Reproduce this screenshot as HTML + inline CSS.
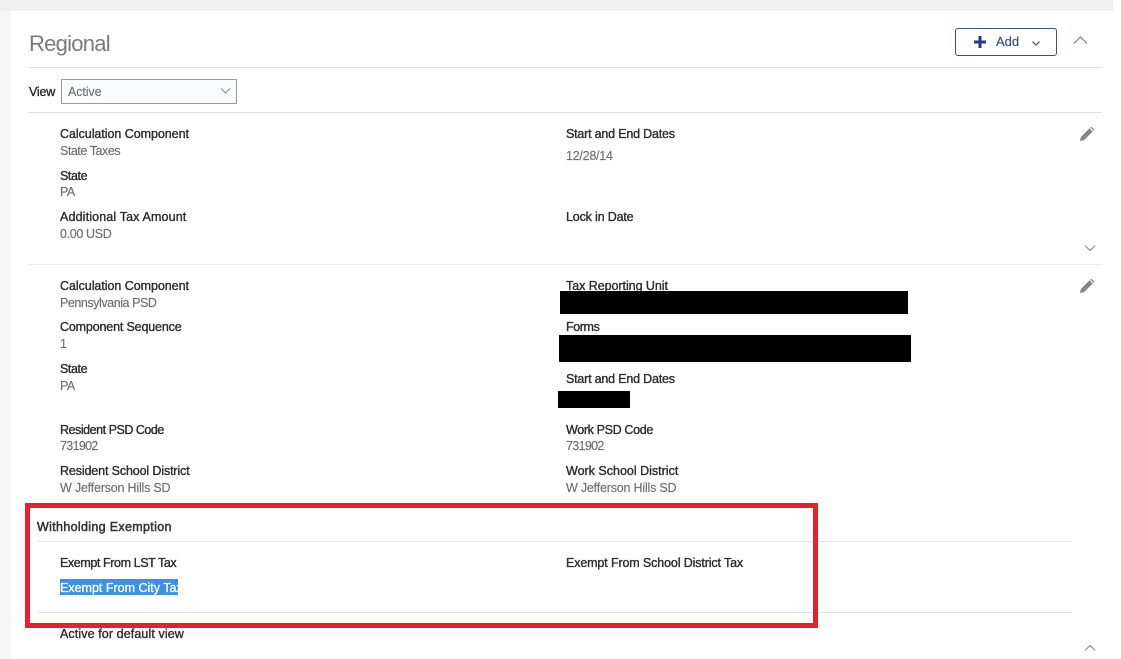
<!DOCTYPE html>
<html><head><meta charset="utf-8"><style>
html,body{margin:0;padding:0}
body{width:1121px;height:659px;background:#fff;position:relative;overflow:hidden;font-family:"Liberation Sans",sans-serif}
.a{position:absolute}
.l,.v{position:absolute;font-size:12.5px;line-height:16px;white-space:nowrap}
.l{color:#2b2b2b;-webkit-text-stroke:.35px #2b2b2b}
.v{color:#6e6e6e;-webkit-text-stroke:.15px #6e6e6e}
.h{position:absolute;height:1px;background:#e2e2e2}
.k{position:absolute;background:#000}
</style></head><body>
<div class="a" style="left:0;top:0;width:1113px;height:11px;background:#f0f0f0"></div>
<div class="a" style="left:0;top:11px;width:11px;height:648px;background:#f6f6f6"></div>
<div class="a" style="left:29px;top:30px;font-size:22px;line-height:28px;color:#7a7a7a;letter-spacing:-.75px">Regional</div>
<div class="h" style="left:28px;top:67px;width:1074px"></div>
<div class="a" style="left:955px;top:28px;width:100px;height:26px;border:1px solid #3c4f86;border-radius:3px"></div>
<svg class="a" style="left:974px;top:36px" width="12" height="12"><path d="M6 0v12M0 6h12" stroke="#24397f" stroke-width="3"/></svg>
<div class="a" style="left:996px;top:34px;font-size:13px;line-height:16px;color:#3c4f86;-webkit-text-stroke:.2px #3c4f86">Add</div>
<svg class="a" style="left:1032px;top:40px" width="8" height="7"><path d="M.5 1.500l3.500 3.500 3.500-3.500" fill="none" stroke="#3c4f86" stroke-width="1.200"/></svg>
<svg class="a" style="left:1073px;top:35px" width="15" height="10"><path d="M1 8.500l6.500-6.500 6.500 6.500" fill="none" stroke="#808080" stroke-width="1.200"/></svg>
<div class="l" style="left:29px;top:84px;letter-spacing:-.2px">View</div>
<div class="a" style="left:61px;top:79px;width:174px;height:23px;border:1px solid #9a9a9a;background:#fbfcfd"></div>
<div class="v" style="left:68px;top:84px;letter-spacing:-.1px">Active</div>
<svg class="a" style="left:220px;top:87px" width="11" height="8"><path d="M1 1.500l4.500 4.500 4.500-4.500" fill="none" stroke="#888" stroke-width="1"/></svg>
<div class="h" style="left:28px;top:112px;width:1074px"></div>

<div class="l" style="left:60px;top:126px;letter-spacing:-.05px">Calculation Component</div>
<div class="v" style="left:60px;top:143px;letter-spacing:-.45px">State Taxes</div>
<div class="l" style="left:60px;top:168px;letter-spacing:-.4px">State</div>
<div class="v" style="left:60px;top:184px;letter-spacing:-.5px">PA</div>
<div class="l" style="left:60px;top:209px;letter-spacing:.14px">Additional Tax Amount</div>
<div class="v" style="left:60px;top:226px;letter-spacing:-.35px">0.00 USD</div>
<div class="l" style="left:566px;top:126px;letter-spacing:-.2px">Start and End Dates</div>
<div class="v" style="left:566px;top:148px;letter-spacing:-.25px">12/28/14</div>
<div class="l" style="left:566px;top:209px;letter-spacing:-.17px">Lock in Date</div>
<svg class="a" style="left:1079px;top:126px" width="16" height="16"><path d="M1 15l.8-4L10.500 2.300l3.200 3.200L5 14.200z M11.300 1.500l1-.8 3 3-.8 1z" fill="#858585"/></svg>
<svg class="a" style="left:1084px;top:244px" width="12" height="9"><path d="M1 1.500l5 5 5-5" fill="none" stroke="#8a8a8a" stroke-width="1.100"/></svg>
<div class="h" style="left:28px;top:264px;width:1074px;background:#eee"></div>

<div class="l" style="left:60px;top:278px;letter-spacing:-.05px">Calculation Component</div>
<div class="v" style="left:60px;top:295px;letter-spacing:-.44px">Pennsylvania PSD</div>
<div class="l" style="left:60px;top:319px;letter-spacing:-.16px">Component Sequence</div>
<div class="v" style="left:60px;top:336px">1</div>
<div class="l" style="left:60px;top:361px;letter-spacing:-.4px">State</div>
<div class="v" style="left:60px;top:378px;letter-spacing:-.5px">PA</div>
<div class="l" style="left:60px;top:422px;letter-spacing:-.47px">Resident PSD Code</div>
<div class="v" style="left:60px;top:438px;letter-spacing:-.67px">731902</div>
<div class="l" style="left:60px;top:463px;letter-spacing:-.13px">Resident School District</div>
<div class="v" style="left:60px;top:480px;letter-spacing:-.2px">W Jefferson Hills SD</div>
<div class="l" style="left:566px;top:278px;letter-spacing:-.05px">Tax Reporting Unit</div>
<div class="k" style="left:560px;top:291px;width:348px;height:23px"></div>
<div class="l" style="left:566px;top:319px;letter-spacing:-.4px">Forms</div>
<div class="k" style="left:559px;top:335px;width:352px;height:27px"></div>
<div class="l" style="left:566px;top:371px;letter-spacing:-.2px">Start and End Dates</div>
<div class="k" style="left:558px;top:391px;width:72px;height:17px"></div>
<div class="l" style="left:566px;top:422px;letter-spacing:-.35px">Work PSD Code</div>
<div class="v" style="left:566px;top:438px;letter-spacing:-.67px">731902</div>
<div class="l" style="left:566px;top:463px">Work School District</div>
<div class="v" style="left:566px;top:480px;letter-spacing:-.2px">W Jefferson Hills SD</div>
<svg class="a" style="left:1079px;top:278px" width="16" height="16"><path d="M1 15l.8-4L10.500 2.300l3.200 3.200L5 14.200z M11.300 1.500l1-.8 3 3-.8 1z" fill="#858585"/></svg>

<div class="l" style="left:37px;top:519px;color:#333;-webkit-text-stroke:.5px #333;letter-spacing:.33px">Withholding Exemption</div>
<div class="h" style="left:38px;top:541px;width:1034px"></div>
<div class="l" style="left:60px;top:555px;letter-spacing:-.4px">Exempt From LST Tax</div>
<div class="a" style="left:60px;top:579px;width:118px;height:16px;background:#3d8fec"></div>
<div class="l" style="left:60px;top:580px;color:#fff;-webkit-text-stroke:.35px #fff">Exempt From City Tax</div>
<div class="l" style="left:566px;top:555px;letter-spacing:-.13px">Exempt From School District Tax</div>
<div class="h" style="left:38px;top:612px;width:1034px"></div>
<div class="a" style="left:25px;top:503px;width:783px;height:115px;border:5px solid #e8202c"></div>
<div class="l" style="left:60px;top:626px;letter-spacing:.1px">Active for default view</div>
<svg class="a" style="left:1084px;top:644px" width="12" height="8"><path d="M1 6.500l5-5 5 5" fill="none" stroke="#8a8a8a" stroke-width="1.100"/></svg>
</body></html>
